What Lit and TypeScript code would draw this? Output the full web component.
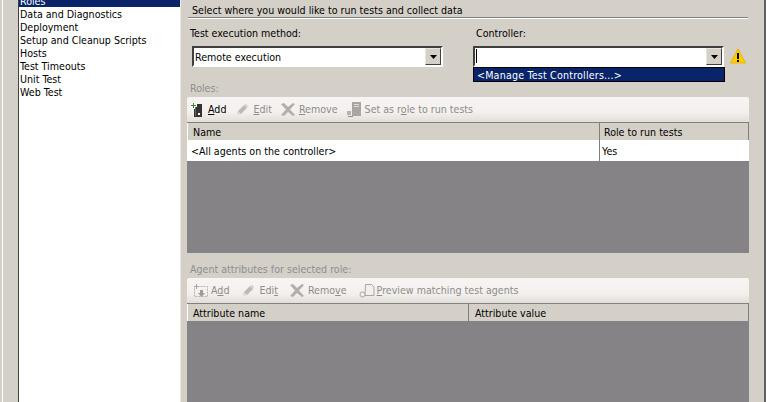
import { LitElement, html, css, svg } from "lit";
import { customElement } from "lit/decorators.js";

const addIcon = svg`<svg class="ic" width="16" height="16" viewBox="0 0 16 16"><path d="M4 2h8v13H4z" fill="#333"/><path d="M5 3h1v11H5z" fill="#666"/><path d="M8 11h2v2H8z" fill="#fff"/><path d="M2 0h3v2h2v3H5v2H2V5H0V2h2z" fill="#fff"/><path d="M3 1h1v2h2v1H4v2H3V4H1V3h2z" fill="#2a8a2a"/></svg>`;
const editIcon = svg`<svg class="ic" width="16" height="16" viewBox="0 0 16 16"><path d="M2 12l1-3 6-6 3 3-6 6z" fill="#bdbab6"/><path d="M9 3l2-1 2 2-1 2z" fill="#d3d0cc"/><path d="M3 9l3 3-4 1z" fill="#e0ddd9"/></svg>`;
const xIcon = svg`<svg class="ic" width="16" height="16" viewBox="0 0 16 16"><path d="M0 2l3-1 4 4 5-4 2 1-5 5.500 5 5.500-2 1-5-4-4 4-3-1 5-5.500z" fill="#b2afab"/></svg>`;
const serverIcon = svg`<svg class="ic" width="16" height="16" viewBox="0 0 16 16"><path d="M5 0h9v14H5z" fill="#a8a5a2"/><path d="M7 2h5v1H7zM7 4h5v1H7z" fill="#dedbd7"/><path d="M0 9h4v4H0z" fill="#b5b2ae"/><path d="M1 14h5v1H1z" fill="#8f8d8a"/></svg>`;
const addDisabled = svg`<svg class="ic" width="16" height="16" viewBox="0 0 16 16"><path d="M1.500 3.500h13v10h-13z" fill="none" stroke="#b5b2ae" stroke-dasharray="2 1"/><path d="M3 1h1v2h2v1H4v2H3V4H1V3h2z" fill="#a9a6a2"/><path d="M7 7h3v3h2l-3.500 4L5 10h2z" fill="#a09d99"/></svg>`;
const previewIcon = svg`<svg class="ic" width="16" height="16" viewBox="0 0 16 16"><path d="M6.500 1.500h6l2.500 2.500v8.500h-9z" fill="#f2f0ec" stroke="#a9a6a2"/><circle cx="3.500" cy="11.500" r="2.500" fill="#f2f0ec" stroke="#a9a6a2"/></svg>`;
const arrow = html`<span class="btn"><svg width="7" height="4" viewBox="0 0 7 4"><path d="M0 0h7L3.500 4z" fill="#000"/></svg></span>`;
const warn = svg`<svg width="16" height="16" viewBox="0 0 16 16"><path d="M8 .8L15.500 15H.5z" fill="#ffcc00" stroke="#eab700" stroke-linejoin="round"/><path d="M7 5h2v6H7zM7 12h2v2H7z" fill="#000"/></svg>`;

@customElement("app-root")
export class AppRoot extends LitElement {
  static styles = css`
    :host { display: block; width: 766px; height: 402px; overflow: hidden; background: #d4d0c8;
      font: 10.6px/13px "DejaVu Sans Condensed", "DejaVu Sans", sans-serif; color: #000; }
    * { box-sizing: border-box; }
    .page { display: flex; height: 402px; width: 766px; border-right: 2px solid #606060; }
    .rail { width: 18px; flex: none; height: 100%; padding-left: 2px; }
    .rail i { display: block; width: 1px; height: 100%; background: #fff; }
    .tree { width: 163px; flex: none; height: 100%; background: #fff; border-left: 1px solid #404040; border-right: 1px solid #ece9e4; overflow: hidden; }
    .tree div { height: 13px; padding: 1px 0 0 1px; white-space: nowrap; }
    .tree .sel { background: #0a246a; color: #fff; margin-top: -6px; }
    .main { flex: none; width: 562px; margin-left: 6px; height: 100%; display: flex; flex-direction: column; overflow: hidden; }
    .head { height: 18px; margin-left: 1px; padding: 4px 0 0 4px; border-bottom: 1px solid #808080; box-shadow: 0 1px 0 #fff; width: 560px; flex: none; }
    .forms { display: flex; margin-top: 9px; flex: none; height: 46px; }
    .f1 { width: 286px; padding-left: 3px; }
    .f2 { position: relative; flex: 1; }
    .f2 .lbl { padding-left: 3px; }
    .lbl { height: 13px; }
    .combo { margin-top: 6px; margin-left: 2px; height: 21px; background: #fff; border: 2px solid; border-color: #404040 #fff #fff #404040; width: 251px; display: flex; align-items: stretch; justify-content: space-between; }
    .combo span.t { padding: 3px 0 0 1px; }
    .btn { width: 16px; flex: none; background: #d4d0c8; border: 1px solid; border-color: #e8e6e0 #404040 #404040 #e8e6e0; display: flex; align-items: center; justify-content: center; }
    .f2 .combo { margin-left: 0; }
    .caret { width: 1px; height: 14px; background: #000; margin: 1px 0 0 1px; }
    .warn { position: absolute; left: 257px; top: 21px; }
    .drop { position: absolute; left: 0; top: 40px; width: 252px; height: 15px; background: #0a246a; color: #fff; border: 1px solid #000; padding: 1px 0 0 3px; line-height: 13px; letter-spacing: 0.2px; }
    .dim { color: #8e8e8e; }
    .roles-lbl { margin: 9px 0 0 3px; height: 13px; flex: none; }
    .bar { margin-top: 2px; height: 25px; width: 562px; border-radius: 2px 2px 0 0; flex: none; display: flex; align-items: center; padding-left: 3px; background: linear-gradient(#f7f4f3, #f3f0ee 60%, #e2dfd9); }
    .bar.wide { padding-left: 6px; }
    .it { display: inline-flex; align-items: center; gap: 2px; margin-right: 9px; color: #8e8c89; white-space: nowrap; }
    .wide .it { margin-right: 12px; }
    .it.on { color: #000; }
    .ic { flex: none; }
    u { text-decoration: underline; }
    .grid { width: 562px; background: #858386; flex: none; border-top: 1px solid #808080; }
    .g1 { height: 131px; }
    .g2 { height: 100px; }
    .hd { display: flex; height: 17px; background: #d4d0c8; border-left: 1px solid #fff; border-right: 1px solid #808080; }
    .hd div { padding: 3px 0 0 5px; }
    .hd .c2 { border-left: 1px solid #808080; padding-left: 4px; }
    .g2 .hd .c2 { padding-left: 6px; }
    .row { display: flex; height: 21px; background: #fff; }
    .row div { padding: 5px 0 0 3px; }
    .row .c1 { margin-left: 1px; }
    .g1 .c1 { width: 411px; } .g1 .c2 { flex: 1; }
    .row .c2 { border-left: 1px solid #808080; padding-left: 2px; }
    .g2 .c1 { width: 280px; } .g2 .c2 { flex: 1; }
    .attr-lbl { margin: 10px 0 0 3px; height: 13px; flex: none; }
  `;
  render() {
    return html`<div class="page">
      <div class="rail"><i></i></div>
      <div class="tree">
        <div class="sel">Roles</div>
        ${["Data and Diagnostics","Deployment","Setup and Cleanup Scripts","Hosts","Test Timeouts","Unit Test","Web Test"].map(t => html`<div>${t}</div>`)}
      </div>
      <div class="main">
        <div class="head">Select where you would like to run tests and collect data</div>
        <div class="forms">
          <div class="f1"><div class="lbl">Test execution method:</div>
            <div class="combo"><span class="t">Remote execution</span>${arrow}</div></div>
          <div class="f2"><div class="lbl">Controller:</div>
            <div class="combo"><span class="caret"></span>${arrow}</div>
            <div class="warn">${warn}</div>
            <div class="drop">&lt;Manage Test Controllers...&gt;</div></div>
        </div>
        <div class="roles-lbl dim">Roles:</div>
        <div class="bar">
          <span class="it on">${addIcon}<span><u>A</u>dd</span></span>
          <span class="it">${editIcon}<span><u>E</u>dit</span></span>
          <span class="it">${xIcon}<span><u>R</u>emove</span></span>
          <span class="it">${serverIcon}<span>Set as r<u>o</u>le to run tests</span></span>
        </div>
        <div class="grid g1">
          <div class="hd"><div class="c1">Name</div><div class="c2">Role to run tests</div></div>
          <div class="row"><div class="c1">&lt;All agents on the controller&gt;</div><div class="c2">Yes</div></div>
        </div>
        <div class="attr-lbl dim">Agent attributes for selected role:</div>
        <div class="bar wide">
          <span class="it">${addDisabled}<span>A<u>d</u>d</span></span>
          <span class="it">${editIcon}<span>Edi<u>t</u></span></span>
          <span class="it">${xIcon}<span>Remo<u>v</u>e</span></span>
          <span class="it">${previewIcon}<span><u>P</u>review matching test agents</span></span>
        </div>
        <div class="grid g2">
          <div class="hd"><div class="c1">Attribute name</div><div class="c2">Attribute value</div></div>
        </div>
      </div>
    </div>`;
  }
}
